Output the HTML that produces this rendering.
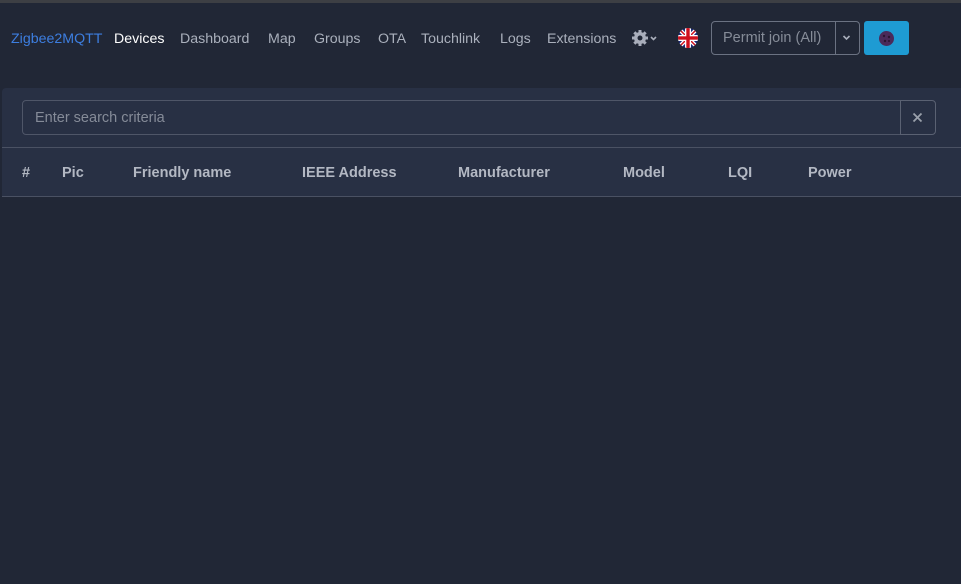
<!DOCTYPE html>
<html><head><style>
body{margin:0;width:961px;height:584px;background:#212736;font-family:"Liberation Sans",sans-serif;position:relative;overflow:hidden}
.top{position:absolute;left:0;top:0;width:961px;height:3px;background:#3d3f44}
.nav{position:absolute;top:31px;font-size:14.2px;color:#aab0bc;white-space:nowrap}
.nav span{position:absolute;top:0}
.card{position:absolute;left:2px;top:88px;width:959px;height:108px;background:#283044;border-radius:4px 0 0 0;border-bottom:1px solid #4a5163}
.search{position:absolute;left:20px;top:12px;width:879px;height:35px;border:1px solid #4f5668;border-radius:4px 0 0 4px;box-sizing:border-box}
.search span{position:absolute;left:12px;top:9px;font-size:14.5px;color:#858b98}
.clr{position:absolute;left:898px;top:12px;width:36px;height:35px;border:1px solid #5a6172;border-radius:0 4px 4px 0;box-sizing:border-box}
.hr{position:absolute;left:0;top:59px;width:959px;height:1px;background:#4a5163}
.th{position:absolute;top:77px;font-size:14.5px;font-weight:bold;color:#b3b8c3}
</style></head><body>
<div class="top"></div>
<div class="nav">
<span style="left:11px;color:#3d7ee0">Zigbee2MQTT</span>
<span style="left:114px;color:#fff">Devices</span>
<span style="left:180px">Dashboard</span>
<span style="left:268px">Map</span>
<span style="left:314px">Groups</span>
<span style="left:378px">OTA</span>
<span style="left:421px">Touchlink</span>
<span style="left:500px">Logs</span>
<span style="left:547px">Extensions</span>
</div>
<svg style="position:absolute;left:631px;top:29px" width="30" height="18" viewBox="0 0 30 18">
<g fill="#a9aebb"><circle cx="9" cy="9" r="6"/><rect x="7.5" y="1" width="3" height="16"/><rect x="1" y="7.5" width="16" height="3"/><rect x="7.5" y="1" width="3" height="16" transform="rotate(45 9 9)"/><rect x="7.5" y="1" width="3" height="16" transform="rotate(-45 9 9)"/></g>
<circle cx="9" cy="9" r="2.5" fill="#212736"/>
<path d="M20 8l2.5 2.5L25 8" stroke="#a9aebb" stroke-width="1.6" fill="none"/>
</svg>
<svg style="position:absolute;left:678px;top:28px" width="20" height="20" viewBox="0 0 20 20">
<defs><clipPath id="c"><circle cx="10" cy="10" r="10"/></clipPath></defs>
<g clip-path="url(#c)"><rect width="20" height="20" fill="#1c2a7a"/>
<path d="M0 0L20 20M20 0L0 20" stroke="#fff" stroke-width="4"/>
<path d="M0 0L20 20M20 0L0 20" stroke="#d0101d" stroke-width="1.5"/>
<rect x="7" width="6" height="20" fill="#fff"/><rect y="7" width="20" height="6" fill="#fff"/>
<rect x="8.3" width="3.4" height="20" fill="#d0101d"/><rect y="8.3" width="20" height="3.4" fill="#d0101d"/></g>
</svg>
<div style="position:absolute;left:711px;top:21px;width:149px;height:34px;border:1px solid #6b7282;border-radius:4px;box-sizing:border-box"></div>
<div style="position:absolute;left:835px;top:21px;width:1px;height:34px;background:#6b7282"></div>
<div style="position:absolute;left:723px;top:30px;font-size:14.5px;color:#868c98">Permit join (All)</div>
<svg style="position:absolute;left:842px;top:34px" width="10" height="8"><path d="M1.5 2l3 3 3-3" stroke="#a9aebb" stroke-width="1.6" fill="none"/></svg>
<div style="position:absolute;left:864px;top:21px;width:45px;height:34px;background:#1e9bd3;border-radius:3px"></div>
<svg style="position:absolute;left:877px;top:29px" width="19" height="19"><circle cx="9.5" cy="9.5" r="7.5" fill="#4a2a5a"/><circle cx="7" cy="7" r="1.2" fill="#2a1532"/><circle cx="12" cy="8" r="1.2" fill="#2a1532"/><circle cx="8" cy="12" r="1.2" fill="#2a1532"/><circle cx="12" cy="12" r="1" fill="#2a1532"/></svg>
<div class="card">
<div class="search"><span>Enter search criteria</span></div>
<div class="clr"><svg width="34" height="33"><path d="M12.5 12.5l8 8M20.5 12.5l-8 8" stroke="#9aa0ab" stroke-width="1.8"/></svg></div>
<div class="hr"></div>
<div class="th" style="left:20px">#</div>
<div class="th" style="left:60px">Pic</div>
<div class="th" style="left:131px">Friendly name</div>
<div class="th" style="left:300px">IEEE Address</div>
<div class="th" style="left:456px">Manufacturer</div>
<div class="th" style="left:621px">Model</div>
<div class="th" style="left:726px">LQI</div>
<div class="th" style="left:806px">Power</div>
</div>
</body></html>
